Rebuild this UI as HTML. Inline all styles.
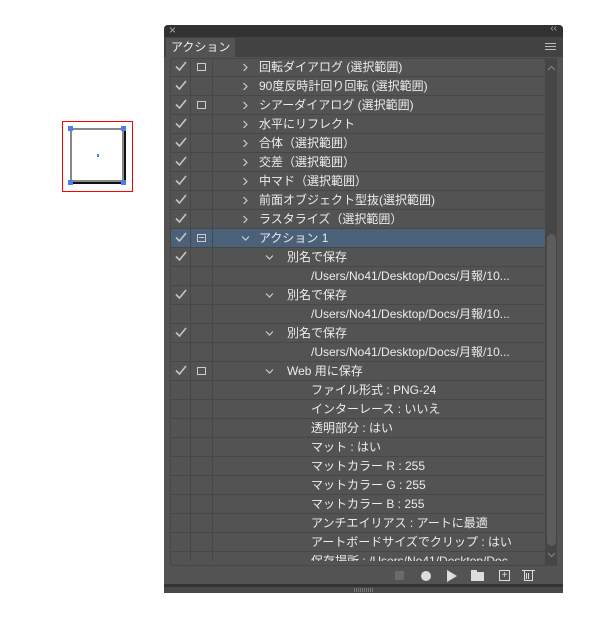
<!DOCTYPE html>
<html><head><meta charset="utf-8"><style>
body{margin:0;width:607px;height:632px;background:#fff;position:relative;overflow:hidden;font-family:"Liberation Sans","Noto Sans CJK JP",sans-serif}
.a{position:absolute}
#panel{left:164px;top:25px;width:399px;height:568px;background:#535353;border-radius:4px 4px 0 0;overflow:hidden}
.row{position:absolute;left:171px;width:374px;height:19px;border-bottom:1px solid #474747;box-sizing:border-box;font-size:12px;color:#ececec;line-height:18px}
.row.sel{background:#4b6179}
.c1{position:absolute;left:0;top:0;width:20px;height:19px;border-right:1px solid #474747;box-sizing:border-box}
.c2{position:absolute;left:20px;top:0;width:22px;height:19px;border-right:1px solid #474747;box-sizing:border-box}
.ck{position:absolute;left:4px;top:3px;width:12px;height:10px}
.bx{position:absolute;left:6px;top:5px;width:9px;height:8px;border:1px solid #ccc;box-sizing:border-box}
.t{position:absolute;white-space:nowrap}
.cv{position:absolute;top:5px;width:8px;height:8px}
</style></head><body>
<div class="a" style="left:62px;top:121px;width:71px;height:71px;border:1px solid #f00;box-sizing:border-box"></div>
<div class="a" style="left:70px;top:128px;width:54px;height:54px;border:2px solid #888;box-sizing:border-box"></div>
<div class="a" style="left:72px;top:182px;width:54px;height:2px;background:#111"></div>
<div class="a" style="left:124px;top:130px;width:2px;height:54px;background:#111"></div>
<div class="a" style="left:68px;top:126px;width:5px;height:5px;background:#4d7df5"></div>
<div class="a" style="left:121px;top:126px;width:5px;height:5px;background:#4d7df5"></div>
<div class="a" style="left:68px;top:180px;width:5px;height:5px;background:#4d7df5"></div>
<div class="a" style="left:121px;top:180px;width:5px;height:5px;background:#4d7df5"></div>
<div class="a" style="left:97px;top:154px;width:2px;height:3px;background:#4d7df5"></div>

<div class="a" id="panel">
 <div class="a" style="left:0;top:0;width:399px;height:12px;background:#323232"></div>
 <div class="a" style="left:5px;top:-2px;color:#aaa;font-size:12px">×</div>
 <div class="a" style="right:6px;top:-2px;color:#aaa;font-size:10px">‹‹</div>
 <div class="a" style="left:0;top:12px;width:399px;height:20px;background:#424242"></div>
 <div class="a" style="left:2px;top:13px;width:69px;height:19px;background:#535353;color:#eee;font-size:12px;line-height:19px;padding-left:5px;box-sizing:border-box">アクション</div>
 <div class="a" style="right:7px;top:18px;width:11px;height:1px;background:#bbb;box-shadow:0 3px 0 #bbb,0 6px 0 #bbb"></div>
 <div class="a" style="left:6px;top:33px;width:376px;height:508px;border:1px solid #474747;border-radius:3px;box-sizing:border-box"></div>
 <div class="a" style="left:381px;top:33px;width:12px;height:508px;background:#464646"></div>
 <div class="a" style="left:383px;top:209px;width:9px;height:312px;background:#5c5c5c;border-radius:5px"></div>
 <svg class="a" style="left:383px;top:40px" width="9" height="6"><path d="M1 5L4.5 1.5L8 5" stroke="#888" fill="none"/></svg>
 <svg class="a" style="left:383px;top:527px" width="9" height="6"><path d="M1 1L4.5 4.5L8 1" stroke="#888" fill="none"/></svg>
 <div class="a" style="left:231px;top:546px;width:9px;height:9px;background:#6a6a6a"></div>
 <div class="a" style="left:257px;top:546px;width:10px;height:10px;background:#ddd;border-radius:50%"></div>
 <div class="a" style="left:283px;top:545px;width:0;height:0;border-left:10px solid #ddd;border-top:6px solid transparent;border-bottom:6px solid transparent"></div>
 <div class="a" style="left:307px;top:547px;width:13px;height:9px;background:#ddd"></div>
 <div class="a" style="left:307px;top:545px;width:6px;height:3px;background:#ddd"></div>
 <div class="a" style="left:335px;top:545px;width:11px;height:11px;border:1px solid #ddd;box-sizing:border-box;color:#ddd;font-size:10px;line-height:9px;text-align:center">+</div>
 <div class="a" style="left:360px;top:546px;width:9px;height:10px;border:1px solid #ddd;border-top:none;box-sizing:border-box"></div>
 <div class="a" style="left:362px;top:548px;width:1px;height:6px;background:#ddd;box-shadow:2px 0 0 #ddd"></div>
 <div class="a" style="left:358px;top:545px;width:13px;height:1px;background:#ddd"></div>
 <div class="a" style="left:0;top:559px;width:399px;height:3px;background:#333"></div>
 <div class="a" style="left:0;top:562px;width:399px;height:6px;background:#484848"></div>
 <div class="a" style="left:190px;top:563px;width:20px;height:4px;background:repeating-linear-gradient(90deg,#777 0 1px,transparent 1px 2px)"></div>
</div>
<div id="rows"></div>
<script>
const R=[
[1,1,1,'回転ダイアログ (選択範囲)'],[1,0,1,'90度反時計回り回転 (選択範囲)'],[1,1,1,'シアーダイアログ (選択範囲)'],[1,0,1,'水平にリフレクト'],[1,0,1,'合体（選択範囲）'],[1,0,1,'交差（選択範囲）'],[1,0,1,'中マド（選択範囲）'],[1,0,1,'前面オブジェクト型抜(選択範囲)'],[1,0,1,'ラスタライズ（選択範囲）'],
[1,2,0,'アクション 1'],[1,0,2,'別名で保存'],[0,0,3,'/Users/No41/Desktop/Docs/月報/10...'],[1,0,2,'別名で保存'],[0,0,3,'/Users/No41/Desktop/Docs/月報/10...'],[1,0,2,'別名で保存'],[0,0,3,'/Users/No41/Desktop/Docs/月報/10...'],[1,1,2,'Web 用に保存'],
[0,0,3,'ファイル形式 : PNG-24'],[0,0,3,'インターレース : いいえ'],[0,0,3,'透明部分 : はい'],[0,0,3,'マット : はい'],[0,0,3,'マットカラー R : 255'],[0,0,3,'マットカラー G : 255'],[0,0,3,'マットカラー B : 255'],[0,0,3,'アンチエイリアス : アートに最適'],[0,0,3,'アートボードサイズでクリップ : はい'],[0,0,3,'保存場所 : /Users/No41/Desktop/Doc...']];
const right='<path d="M2.5 1L6 4.5L2.5 8" stroke="#ccc" stroke-width="1.2" fill="none"/>';
const down='<path d="M1 2.5L4.5 6L8 2.5" stroke="#ccc" stroke-width="1.2" fill="none"/>';
let h='';
R.forEach((r,i)=>{
 const top=58+i*19;
 let s=`<div class="row${i==9?' sel':''}" style="top:${top}px${i==26?';height:9px;overflow:hidden;border-bottom:none':''}"><div class="c1">`;
 if(r[0])s+=`<svg class="ck" viewBox="0 0 12 10"><path d="M1 5.5L4.5 9L11 1" stroke="#c4c4c4" stroke-width="1.6" fill="none"/></svg>`;
 s+=`</div><div class="c2">`;
 if(r[1]==1)s+=`<div class="bx"></div>`;
 if(r[1]==2)s+=`<div class="bx"><div style="position:absolute;left:1px;top:2px;width:5px;height:1px;background:#ccc"></div></div>`;
 s+=`</div>`;
 if(r[2]==1)s+=`<svg class="cv" style="left:70px">${right}</svg><span class="t" style="left:88px">${r[3]}</span>`;
 else if(r[2]==0)s+=`<svg class="cv" style="left:70px">${down}</svg><span class="t" style="left:88px">${r[3]}</span>`;
 else if(r[2]==2)s+=`<svg class="cv" style="left:94px">${down}</svg><span class="t" style="left:116px">${r[3]}</span>`;
 else s+=`<span class="t" style="left:140px">${r[3]}</span>`;
 s+='</div>';h+=s;});
document.getElementById('rows').innerHTML=h;
</script>
</body></html>
